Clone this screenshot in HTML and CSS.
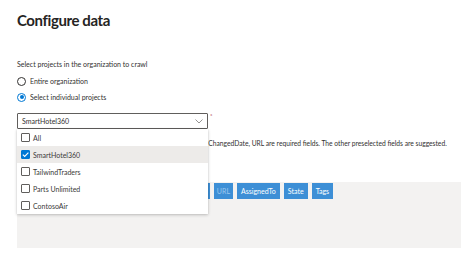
FILE: index.html
```html
<!DOCTYPE html>
<html lang="en">
<head>
<meta charset="utf-8">
<title>Configure data</title>
<link rel="stylesheet" href="styles.css">
</head>
<body>
<main class="page">
  <h1 class="title">Configure data</h1>
  <p class="label">Select projects in the organization to crawl</p>
  <div class="radios">
    <div class="radio-row"><span class="radio"></span><span>Entire organization</span></div>
    <div class="radio-row"><span class="radio checked"></span><span>Select individual projects</span></div>
  </div>
  <div class="field">
    <div class="dropdown">
      <span>SmartHotel360</span>
      <svg class="chev" width="8" height="5" viewBox="0 0 8 5"><path d="M0.5 0.5 L4 4 L7.5 0.5" fill="none" stroke="#8a8886" stroke-width="0.9"/></svg>
    </div>
    <span class="req">*</span>
    <div class="menu">
      <div class="item"><span class="cb"></span><span>All</span></div>
      <div class="item selected"><span class="cb on"><svg width="9" height="9" viewBox="0 0 9 9"><path d="M1.8 4.6 L3.7 6.5 L7.4 2.6" fill="none" stroke="#fff" stroke-width="1.1"/></svg></span><span>SmartHotel360</span></div>
      <div class="item"><span class="cb"></span><span>TailwindTraders</span></div>
      <div class="item"><span class="cb"></span><span>Parts Unlimited</span></div>
      <div class="item"><span class="cb"></span><span>ContosoAir</span></div>
    </div>
  </div>
  <p class="desc">ID, Title, Description, CreatedBy, CreatedDate, ChangedBy, ChangedDate, URL are required fields. The other preselected fields are suggested.</p>
  <div class="fields-box">
    <div class="chips">
      <span class="chip">ID</span>
      <span class="chip">Title</span>
      <span class="chip">Description</span>
      <span class="chip">CreatedBy</span>
      <span class="chip">ChangedDate</span>
      <span class="chip faded">URL</span>
      <span class="chip">AssignedTo</span>
      <span class="chip">State</span>
      <span class="chip">Tags</span>
    </div>
  </div>
</main>
</body>
</html>
```
FILE: styles.css
```css
* { box-sizing: border-box; }
html, body { margin: 0; background: #fff; }
body {
  font-family: "Lato", "Open Sans", sans-serif;
  color: #323130;
  font-size: 7px;
  width: 474px;
  height: 254px;
  overflow: hidden;
}
.page { padding: 10px 13px 0 17px; }
.title {
  margin: 0;
  font-size: 15px;
  line-height: 21px;
  font-weight: 700;
  color: #252423;
  letter-spacing: -0.4px;
}
.label { margin: 28px 0 0; line-height: 10px; height: 10px; }
.radios { margin-top: 4px; display: flex; flex-direction: column; }
.radio-row { display: flex; align-items: center; gap: 4px; height: 16px; }
.radio {
  width: 9px; height: 9px; border-radius: 50%;
  border: 1px solid #323130; flex: none; position: relative;
}
.radio.checked { border-color: #0078d4; }
.radio.checked::after {
  content: ""; position: absolute; left: 1.5px; top: 1.5px;
  width: 4px; height: 4px; border-radius: 50%; background: #0078d4;
}
.field { margin-top: 8px; position: relative; display: flex; align-items: flex-start; }
.dropdown {
  width: 191px; height: 16px; border: 1px solid #605e5c; border-radius: 1px;
  display: flex; align-items: center; justify-content: space-between;
  padding: 0 4px 0 4px;
}
.chev { flex: none; }
.req { color: #a4262c; font-size: 6px; line-height: 6px; margin-left: 2px; margin-top: 0; }
.menu {
  position: absolute; left: 0; top: 16px; width: 191px; z-index: 2;
  background: #fff; box-shadow: 0 1px 3px rgba(0,0,0,0.22), 0 0 1px rgba(0,0,0,0.12);
  display: flex; flex-direction: column;
}
.item { height: 17px; display: flex; align-items: center; gap: 3px; padding-left: 4px; color: #3b3a39; }
.item.selected { background: #edebe9; }
.cb {
  width: 9px; height: 9px; border: 1px solid #605e5c; border-radius: 1px; flex: none;
  display: flex; align-items: center; justify-content: center;
}
.cb.on { background: #0078d4; border-color: #0078d4; }
.cb svg { flex: none; }
.desc { margin: 9px 0 0; line-height: 10px; white-space: nowrap; font-size: 6.7px; text-indent: 17px; }
.fields-box {
  margin-top: 34px; height: 66px; background: #f3f2f1; padding: 1px 1px 1px 6px;
}
.chips { display: flex; gap: 4px; }
.chip {
  height: 16px; line-height: 16px; padding: 0 4px; background: #3d8fd6; color: #fff;
  font-size: 7px;
}
.chip.faded { color: #9cc8ee; padding: 0 3px; }
```
